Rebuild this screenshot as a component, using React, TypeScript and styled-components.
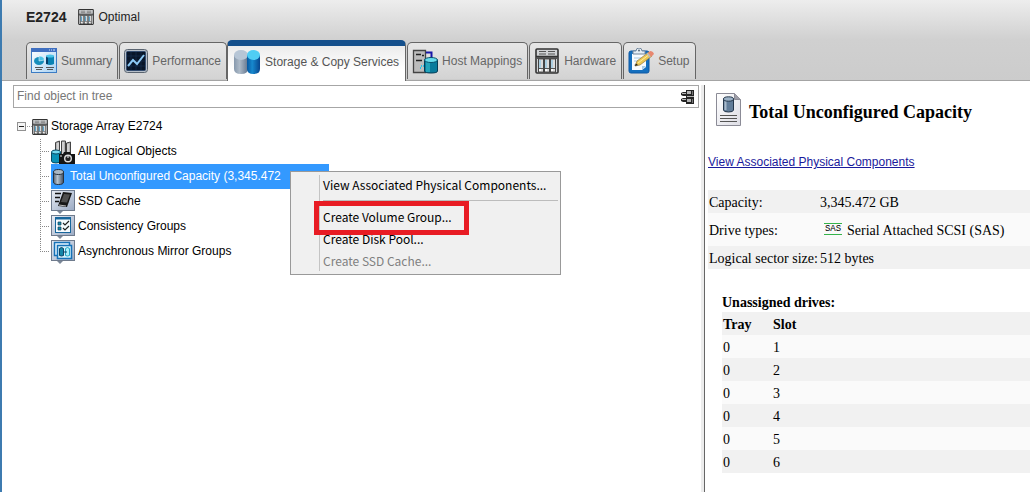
import React from 'react';
import styled, { createGlobalStyle, css } from 'styled-components';

const sans = "'Liberation Sans', Arial, sans-serif";
const serif = "'Liberation Serif', 'Times New Roman', serif";

const GlobalStyle = createGlobalStyle`
  *, *::before, *::after { box-sizing: border-box; }
  body { margin: 0; background: #fff; color: #000; font: 12px/16px ${sans}; }
  svg { display: block; flex: none; }
  button, input { font: inherit; color: inherit; }
`;

const Page = styled.div`
  display: flex;
  flex-direction: column;
  min-height: 100vh;
  border-left: 2px solid #3d7bb0;
`;

const Header = styled.header`
  background: linear-gradient(#ededed, #d0d0d0 40px, #cccccc);
  border-bottom: 1px solid #a4a4a4;
`;

const StatusBar = styled.div`
  display: flex;
  align-items: center;
  height: 40px;
  padding: 0 24px 6px;
`;

const ArrayName = styled.h1`
  margin: 0 12px 0 0;
  font-size: 14px;
  line-height: 16px;
  color: #222;
`;

const StatusText = styled.span`
  margin: 0 0 0 4px;
  color: #222;
`;

const Tabs = styled.nav`
  display: flex;
  align-items: flex-end;
  height: 40px;
  padding-left: 24px;
`;

const Tab = styled.button<{ $active?: boolean }>`
  display: flex;
  align-items: center;
  gap: 4px;
  height: 37px;
  margin: 0 0 1px;
  padding: 0 5px 0 4px;
  border: 1px solid #666;
  border-width: 1px 1px 0;
  border-radius: 5px 5px 0 0;
  background: linear-gradient(#e6e6e6, #d3d3d3);
  color: #666;
  white-space: nowrap;
  & + & { margin-left: 1px; }
  ${p => p.$active && css`
    height: 41px;
    margin-bottom: -1px;
    && { margin-left: 0; }
    padding: 0 6px 4px;
    border-top: 6px solid #15508c;
    background: linear-gradient(#ececec, #fff 24px);
    color: #555;
  `}
`;

const Workspace = styled.main`
  flex: 1;
  display: grid;
  grid-template-columns: minmax(0, 1fr) 325px;
  padding-top: 4px;
`;

const TreePane = styled.section`
  padding: 0 5px 0 11px;
  border-right: 1px solid #666;
  box-shadow: inset -3px 0 #ececec;
`;

const SearchBox = styled.div`
  display: flex;
  align-items: center;
  height: 23px;
  padding: 0 3px;
  border: 1px solid #a6a6a6;
`;

const SearchInput = styled.input`
  flex: 1;
  min-width: 0;
  padding: 0 0 2px;
  border: 0;
  outline: 0;
  background: none;
  &::placeholder { color: #777; opacity: 1; }
`;

const IconButton = styled.button`
  padding: 0;
  border: 0;
  background: none;
`;

const Tree = styled.ul`
  list-style: none;
  margin: 6px 0 0;
  padding: 0 0 0 4px;
`;

const Row = styled.div`
  display: flex;
  align-items: center;
  height: 25px;
`;

const Expander = styled.button`
  display: flex;
  align-items: center;
  justify-content: center;
  width: 9px;
  height: 9px;
  padding: 0;
  border: 1px solid #919191;
  background: #f4f4f4;
  &::before { content: ''; width: 5px; height: 1px; background: #222; }
`;

const Stub = styled.span`
  width: 5px;
  margin: 0 0 0 1px;
  border-top: 1px dotted #999;
`;

const Branches = styled.ul`
  list-style: none;
  margin: 0;
  padding: 0 0 0 23px;
`;

const dots = (deg: string) => `repeating-linear-gradient(${deg}, #888 0 1px, transparent 1px 2px)`;

const Branch = styled.li`
  position: relative;
  display: flex;
  align-items: center;
  height: 25px;
  padding-left: 11px;
  background:
    ${dots('180deg')} 0 0 / 1px 100% no-repeat,
    ${dots('90deg')} 0 12px / 10px 1px no-repeat;
  &:last-child {
    background:
      ${dots('180deg')} 0 0 / 1px 13px no-repeat,
      ${dots('90deg')} 0 12px / 10px 1px no-repeat;
  }
`;

const Node = styled.span<{ $selected?: boolean }>`
  display: flex;
  align-items: center;
  gap: ${p => (p.$selected ? 6 : 3)}px;
  height: 25px;
  white-space: nowrap;
  ${p => p.$selected && css`
    width: 278px;
    padding-left: 2px;
    background: #3399ff;
    color: #fff;
  `}
`;

const NodeText = styled.span<{ $gap?: number }>`
  margin-left: ${p => p.$gap || 0}px;
  padding-bottom: 2px;
`;

const Menu = styled.div`
  position: absolute;
  z-index: 2;
  left: 250px;
  top: 7px;
  width: 271px;
  padding: 2px;
  border: 1px solid #999;
  background: linear-gradient(#c4c4c4, #c4c4c4) 28px 3px / 1px calc(100% - 6px) no-repeat #f0f0f0;
  font: 12px/22px 'Noto Sans CJK TC', sans-serif;
`;

const MenuItem = styled.button<{ $marked?: boolean }>`
  position: relative;
  display: block;
  width: 100%;
  height: 22px;
  padding: 0 0 0 30px;
  border: 0;
  background: none;
  text-align: left;
  white-space: nowrap;
  &:disabled { color: #808080; }
  ${p => p.$marked && css`
    z-index: 1;
    &::after {
      content: '';
      position: absolute;
      left: 21px;
      top: -5px;
      width: 155px;
      height: 34px;
      border: 5px solid #e81c24;
    }
  `}
`;

const Divider = styled.hr`
  margin: 4px 0 5px 30px;
  border: 0;
  border-top: 1px solid #bcbcbc;
`;

const Details = styled.section`
  padding: 5px 0 12px 3px;
  font: 14px/22px ${serif};
`;

const Title = styled.h2`
  display: flex;
  align-items: center;
  gap: 8px;
  margin: 0;
  padding: 0 8px;
  font-size: 18px;
  line-height: 32px;
  white-space: nowrap;
`;

const TitleText = styled.span`
  padding-top: 6px;
`;

const PartsLink = styled.a`
  display: block;
  width: fit-content;
  margin: 26px 0 20px;
  color: #1a1a9c;
  font: 12px/16px ${sans};
`;

const Facts = styled.table`
  width: 100%;
  border-collapse: collapse;
  th, td { padding: 2px 0 0 1px; height: 23px; font-weight: 400; text-align: left; line-height: 20px; white-space: nowrap; }
  th { width: 111px; }
  tr { background: #f1f1f1; }
  tr:nth-child(even) { background: #fafafa; }
  tr:nth-child(even) > * { height: 33px; }
`;

const DriveType = styled.span`
  display: flex;
  align-items: center;
  gap: 5px;
  padding-left: 4px;
`;

const SasMark = styled.span`
  width: 18px;
  margin-bottom: 3px;
  border: 1px solid #35b34a;
  border-width: 1px 0;
  font: 9px/10px 'Liberation Mono', monospace;
  text-align: center;
`;

const Drives = styled.table`
  width: calc(100% - 14px);
  margin: 25px 0 0 14px;
  border-collapse: collapse;
  caption { text-align: left; font-weight: 700; line-height: 18px; }
  th, td { height: 23px; padding: 3px 0 0 1px; text-align: left; line-height: 20px; }
  th:first-child { width: 50px; }
  tr { background: #fafafa; }
  thead tr, tbody tr:nth-child(even) { background: #f1f1f1; }
`;

const SummaryIcon = () => (
  <svg width="26" height="26" viewBox="0 0 26 26">
    <defs><linearGradient id="sum" x2="1" y2="1"><stop stopColor="#fff" /><stop offset="1" stopColor="#a9d2f3" /></linearGradient></defs>
    <rect x=".5" y=".5" width="25" height="24" fill="url(#sum)" stroke="#3c7cc4" />
    <path d="M0 0h26v4H0z" fill="#3f6fc0" /><path d="M18 2h1m1 0h1m1 0h2" stroke="#cfe2fa" />
    <ellipse cx="8" cy="13" rx="5" ry="4" fill="#168ebc" /><path d="M8 13V8q5 0 5.500 4z" fill="#4cc4e8" stroke="#fff" strokeWidth=".5" />
    <path d="M15 8v8q4 2 8 0V8z" fill="#0a83b4" /><path d="M16 8v8" stroke="#063f6b" strokeWidth="2" /><ellipse cx="19" cy="8" rx="4" ry="1.500" fill="#4cc4e8" />
    <path d="M4 19.500h8m-7 2h6m4-2h8m-7 2h6" stroke="#555" />
  </svg>
);

const PerformanceIcon = () => (
  <svg width="24" height="24" viewBox="0 0 24 24">
    <rect x=".5" y=".5" width="23" height="23" rx="3" fill="#b6bfc9" stroke="#59636f" />
    <rect x="2.500" y="2.500" width="19" height="19" rx="1" fill="#081528" stroke="#344d70" />
    <path d="M3 7h18M3 12h18M3 17h18M7 3v18M12 3v18M17 3v18" stroke="#193456" strokeWidth=".6" />
    <path d="M4 17l5-6 4 4 7-9" fill="none" stroke="#8cc9f5" strokeWidth="2" />
  </svg>
);

const StorageIcon = () => (
  <svg width="27" height="24" viewBox="0 0 27 24">
    <defs>
      <linearGradient id="cyg"><stop stopColor="#8799ad" /><stop offset=".4" stopColor="#adbac8" /><stop offset="1" stopColor="#62758d" /></linearGradient>
      <linearGradient id="cyb"><stop stopColor="#0757a0" /><stop offset=".4" stopColor="#1789ce" /><stop offset="1" stopColor="#07458e" /></linearGradient>
    </defs>
    <path d="M0 5v14q0 5 7 5t7-5V5z" fill="url(#cyg)" /><ellipse cx="7" cy="5" rx="7" ry="5" fill="#b7c6d6" />
    <path d="M13 5v14q0 5 6.500 5t6.500-5V5z" fill="url(#cyb)" /><ellipse cx="19.500" cy="5" rx="6.500" ry="5" fill="#50cdf4" />
  </svg>
);

const HostIcon = () => (
  <svg width="26" height="25" viewBox="0 0 26 25">
    <path d="M1.500 1.500h12v22h-12z" fill="#bcbcbc" stroke="#444" strokeWidth="1.300" />
    <path d="M4 5.500h5M4 11.500h6m0-5h2" stroke="#222" strokeWidth="1.300" /><path d="M9 17h3m-4 2h2" stroke="#24c5e8" strokeWidth="2" strokeDasharray="1 1" />
    <path d="M14 3.500h5.500V10" fill="none" stroke="#1717a8" strokeWidth="2" />
    <path d="M12.500 11v11q0 2 6.500 2t6.500-2V11z" fill="#087b9c" stroke="#053d57" /><path d="M16 13v10" stroke="#23a4ba" strokeWidth="4" />
    <ellipse cx="19" cy="11" rx="6.500" ry="2.500" fill="#65dcec" stroke="#07506d" />
  </svg>
);

const RackIcon = ({ small }: { small?: boolean }) => (
  <svg width={small ? 16 : 26} height={small ? 16 : 26} viewBox={small ? '0 0 24 26' : '-1 0 26 26'} preserveAspectRatio="none">
    <rect x="1" y="1" width="22" height="24" rx="1" fill="#d1d3d5" stroke="#333" strokeWidth="1.600" />
    <path d="M1 8.500h22" stroke="#333" strokeWidth="1.500" /><path d="M4 3.500h7m2 0h7M4 6h7m2 0h7" stroke="#555" strokeWidth="1" />
    <path d="M2 9h20v2H2z" fill="#555" />
    {[3, 9, 15].map(x => (
      <g key={x}>
        <rect x={x + .5} y="11" width="5" height="13" fill="#fafafa" stroke="#444" />
        <path d={`M${x + 4} 12v11`} stroke="#bbb" />
        <path d={`M${x + 2} 12v8`} stroke="#348ab8" strokeWidth={small ? 1.500 : .8} />
        <path d={`M${x + 1} 20.500h4`} stroke="#555" />
      </g>
    ))}
  </svg>
);

const SetupIcon = () => (
  <svg width="26" height="26" viewBox="0 0 26 26">
    <rect x="1" y="3" width="20" height="22" rx="2" fill="#146fbe" stroke="#0d59a5" />
    <path d="M4 6h14v13l-4 3H4z" fill="#f9fcff" /><path d="M14 22v-4h4z" fill="#a9cdea" />
    <path d="M5 6V3h3q0-3 3-3t3 3h3v3z" fill="#e5eef6" stroke="#72869b" /><circle cx="11" cy="2.500" r="1" fill="#5d6c7c" />
    <path d="M6 10h7m-7 3h5m-5 4h4" stroke="#a8c7e0" />
    <path d="M7 18l2-5 12-9 3 4-12 9z" fill="#edc755" stroke="#8f7941" strokeWidth=".7" /><path d="M10 15l12-9" stroke="#fff09a" />
    <path d="M20 5l2-2q3 0 4 3l-3 3z" fill="#e8876f" /><path d="M19 5l3 4" stroke="#bbb" strokeWidth="1.500" /><path d="M7 18l1-2.500 2 1.500z" fill="#222" />
  </svg>
);

const FindIcon = () => (
  <svg width="15" height="14" viewBox="0 0 15 14">
    <path d="M6 0h8v14H6v-2H3l-2-1V9l2-1h3V6H3L1 5V3l2-1h3z" fill="#252525" />
    <path d="M2 3h4v1H2zm0 6h4v1H2zM7 1h4v3H7zm0 8h4v3H7zM7 6h7v1H7z" fill="#b4b4b4" /><path d="M12.500 1v4m0 4v4" stroke="#777" />
  </svg>
);

const Drum = () => (
  <svg width="11" height="16" viewBox="0 0 11 16">
    <defs><linearGradient id="drum"><stop stopColor="#526274" /><stop offset=".4" stopColor="#b7c3cf" /><stop offset="1" stopColor="#3e4d60" /></linearGradient></defs>
    <path d="M.5 3v10q0 2.500 5 2.500t5-2.500V3z" fill="url(#drum)" stroke="#27313e" /><ellipse cx="5.500" cy="3" rx="5" ry="2.500" fill="#a9b7c5" stroke="#27313e" />
  </svg>
);

const LogicalIcon = () => (
  <svg width="24" height="24" viewBox="0 0 24 24">
    <path d="M4.500 2.500l4-1.500v11h-4zM10.500 1h4v14h-4zM15.500 3l4-1v12h-4z" fill="#b4b4b4" stroke="#444" /><path d="M7 3v9m5-10v12m5-10v9" stroke="#eee" />
    <path d="M.5 12v9q0 2 4.500 2t4.500-2v-9z" fill="#0b91b5" stroke="#084862" /><ellipse cx="5" cy="12" rx="4.500" ry="2" fill="#74d9ef" stroke="#084862" />
    <path d="M8 14h4l1-2h6l1 2h4v10H8z" fill="#151515" /><circle cx="17" cy="18.500" r="4" fill="#ddd" /><circle cx="17" cy="18.500" r="2.600" fill="#222" /><path d="M16 17h2" stroke="#fff" /><path d="M9 16h2" stroke="#ddd" />
  </svg>
);

const Badge = ({ children }: { children: React.ReactNode }) => (
  <svg width="24" height="25" viewBox="0 0 24 25">
    <defs><linearGradient id="badge" x2="1" y2="1"><stop stopColor="#e8edf5" /><stop offset="1" stopColor="#9baac3" /></linearGradient></defs>
    <path d="M5 21h8l-4 4z" fill="#7b8798" /><rect x=".5" y="1.500" width="23" height="20" fill="url(#badge)" stroke="#6f7b8d" />
    <g transform="translate(0 -1)">{children}</g>
  </svg>
);

const CacheIcon = () => (
  <Badge><path d="M4 5.500h6m-6 4h5m-5 4h4" stroke="#111" strokeWidth="1.500" /><path d="M12 4l9 1-5 14-9-1z" fill="#171717" /><path d="M13 6l6 .5-3 8-6-.5z" fill="#4f4f4f" /><path d="M8 17l7 1" stroke="#bbb" /></Badge>
);

const ConsistencyIcon = () => (
  <Badge><rect x="4.500" y="4.500" width="15" height="15" fill="#f6fbff" stroke="#17669c" /><path d="M4 5.500h16" stroke="#17669c" strokeWidth="2" /><path d="M7 9h3v3H7zm0 5h3v3H7z" fill="#168cac" stroke="#163c58" strokeWidth=".7" /><path d="M12 10l2 2 4-4m-6 7l2 2 4-4" fill="none" stroke="#222" strokeWidth="1.200" /></Badge>
);

const MirrorIcon = () => (
  <Badge><path d="M3.500 4.500h15v13h-15z" fill="#e7f6ff" stroke="#1672b8" strokeWidth="1.500" /><path d="M6.500 7.500h14v13h-14z" fill="#d5f2fb" stroke="#1672b8" strokeWidth="1.500" /><path d="M8.500 10.500q2-2 4 0v7q-2 1-4 0z" fill="#1486a8" stroke="#114566" /><path d="M14.500 10.500q2-2 4 0v7q-2 1-4 0z" fill="#aceefa" stroke="#22a4c5" /><path d="M12 14h4" stroke="#114566" /></Badge>
);

const DocumentIcon = () => (
  <svg width="25" height="33" viewBox="0 0 25 33">
    <defs><linearGradient id="doc" x2="1" y2="1"><stop stopColor="#fff" /><stop offset="1" stopColor="#dddde5" /></linearGradient></defs>
    <path d="M.5.5h18l6 6v26H.5z" fill="url(#doc)" stroke="#8b8b96" /><path d="M18.500.5v6h6" fill="#9e9ea8" stroke="#8b8b96" />
    <path d="M7.500 6v11q0 2 5 2t5-2V6z" fill="#627d99" stroke="#26384c" /><path d="M9.500 7v10" stroke="#a8bacb" strokeWidth="2" /><ellipse cx="12.500" cy="6" rx="5" ry="2.200" fill="#9cb2c7" stroke="#26384c" />
    <path d="M4 22.500h17m-17 3h17m-17 3h17" stroke="#555" />
  </svg>
);

const tabs = [
  { label: 'Summary', icon: <SummaryIcon /> },
  { label: 'Performance', icon: <PerformanceIcon /> },
  { label: 'Storage & Copy Services', icon: <StorageIcon />, active: true },
  { label: 'Host Mappings', icon: <HostIcon /> },
  { label: 'Hardware', icon: <RackIcon /> },
  { label: 'Setup', icon: <SetupIcon /> },
];

const groups = [
  { label: 'SSD Cache', icon: <CacheIcon /> },
  { label: 'Consistency Groups', icon: <ConsistencyIcon /> },
  { label: 'Asynchronous Mirror Groups', icon: <MirrorIcon /> },
];

const slots = [1, 2, 3, 4, 5, 6];

export default function App() {
  return (
    <Page>
      <GlobalStyle />
      <Header>
        <StatusBar>
          <ArrayName>E2724</ArrayName>
          <RackIcon small />
          <StatusText>Optimal</StatusText>
        </StatusBar>
        <Tabs>
          {tabs.map(t => (
            <Tab key={t.label} type="button" $active={t.active}>{t.icon}{t.label}</Tab>
          ))}
        </Tabs>
      </Header>
      <Workspace>
        <TreePane>
          <SearchBox>
            <SearchInput type="text" placeholder="Find object in tree" aria-label="Find object in tree" />
            <IconButton type="button" aria-label="Find"><FindIcon /></IconButton>
          </SearchBox>
          <Tree>
            <li>
              <Row>
                <Expander type="button" aria-label="Collapse" />
                <Stub />
                <RackIcon small />
                <NodeText $gap={3}>Storage Array E2724</NodeText>
              </Row>
              <Branches>
                <Branch><Node><LogicalIcon /><NodeText>All Logical Objects</NodeText></Node></Branch>
                <Branch>
                  <Node $selected><Drum /><NodeText>Total Unconfigured Capacity (3,345.472</NodeText></Node>
                  <Menu>
                    <MenuItem type="button">View Associated Physical Components...</MenuItem>
                    <Divider />
                    <MenuItem type="button" $marked>Create Volume Group...</MenuItem>
                    <MenuItem type="button">Create Disk Pool...</MenuItem>
                    <MenuItem type="button" disabled>Create SSD Cache...</MenuItem>
                  </Menu>
                </Branch>
                {groups.map(g => (
                  <Branch key={g.label}><Node>{g.icon}<NodeText>{g.label}</NodeText></Node></Branch>
                ))}
              </Branches>
            </li>
          </Tree>
        </TreePane>
        <Details>
          <Title><DocumentIcon /><TitleText>Total Unconfigured Capacity</TitleText></Title>
          <PartsLink href="#components">View Associated Physical Components</PartsLink>
          <Facts>
            <tbody>
              <tr><th scope="row">Capacity:</th><td>3,345.472 GB</td></tr>
              <tr><th scope="row">Drive types:</th><td><DriveType><SasMark>SAS</SasMark>Serial Attached SCSI (SAS)</DriveType></td></tr>
              <tr><th scope="row">Logical sector size:</th><td>512 bytes</td></tr>
            </tbody>
          </Facts>
          <Drives>
            <caption>Unassigned drives:</caption>
            <thead><tr><th scope="col">Tray</th><th scope="col">Slot</th></tr></thead>
            <tbody>
              {slots.map(s => <tr key={s}><td>0</td><td>{s}</td></tr>)}
            </tbody>
          </Drives>
        </Details>
      </Workspace>
    </Page>
  );
}
